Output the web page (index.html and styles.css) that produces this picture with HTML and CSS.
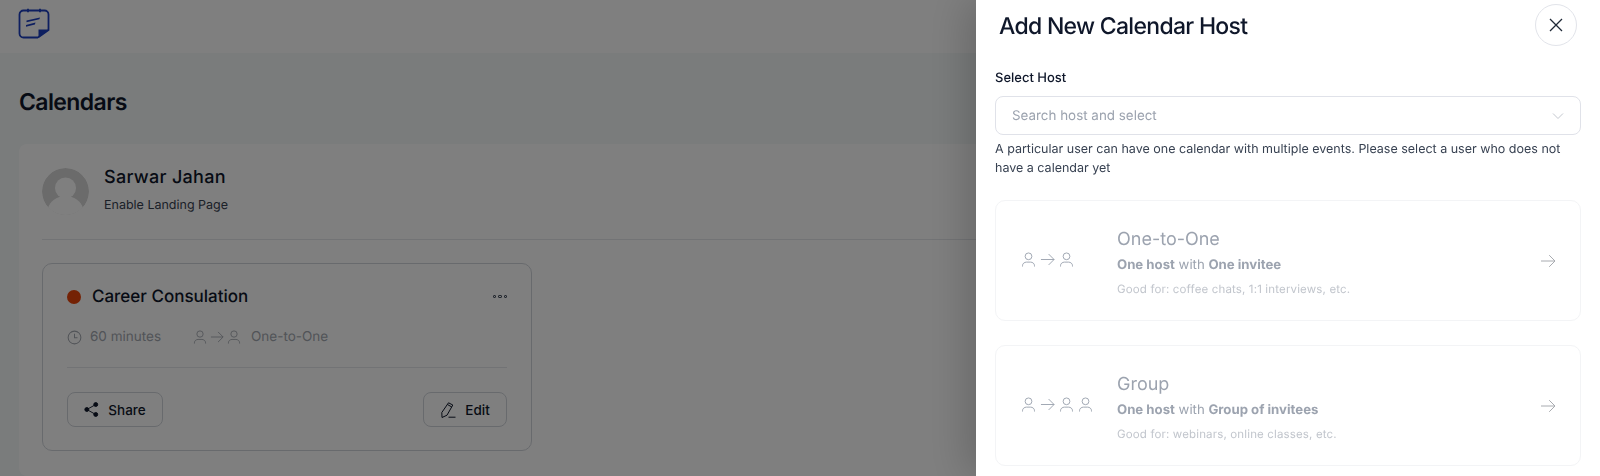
FILE: index.html
```html
<!DOCTYPE html>
<html lang="en">
<head>
    <meta charset="UTF-8">
    <meta name="viewport" content="width=device-width, initial-scale=1.0">
    <title>Calendars</title>
    <link rel="stylesheet" href="styles.css">
</head>
<body>
    <svg class="icon-defs" width="0" height="0">
        <defs>
            <symbol id="person" viewBox="0 0 16 16">
                <circle cx="8" cy="4.600" r="3.600"/>
                <path d="M1.600 15.500v-.8c0-2.400 2-3.900 4.200-3.900h4.400c2.200 0 4.200 1.500 4.200 3.900v.8"/>
            </symbol>
            <symbol id="arrow" viewBox="0 0 16 16">
                <path d="M1 8h14M9.200 2.200 15 8l-5.800 5.800"/>
            </symbol>
        </defs>
    </svg>

    <header class="topbar">
        <svg class="logo" viewBox="0 0 32 32" width="32" height="32">
            <path d="M20 29.500H5.500a4 4 0 0 1-4-4V6.500a4 4 0 0 1 4-4h21a4 4 0 0 1 4 4V22l-10.500 7.500"/>
            <path d="M10 .8v3.500M22 .8v3.500"/>
            <path class="logo-fill" d="M20.500 29.500V21.500h10z"/>
            <path class="logo-fill" d="M8.500 12.500 22 9.500l-.6 1.800-12.900 2.900zM8 17l9.500-2.400-.6 1.800-8.900 2.300z"/>
        </svg>
    </header>

    <main class="content">
        <h1 class="page-title">Calendars</h1>
        <section class="panel">
            <div class="host-row">
                <svg class="avatar" viewBox="0 0 47 47" width="47" height="47">
                    <circle class="avatar-bg" cx="23.500" cy="23.500" r="23.500"/>
                    <circle class="avatar-fg" cx="23.500" cy="20" r="10.500"/>
                    <path class="avatar-fg" d="M6 40c2-7 9-12 17.500-12S39 33 41 40c-4 4.500-10.500 7-17.500 7S10 44.500 6 40z"/>
                </svg>
                <div>
                    <div class="host-name">Sarwar Jahan</div>
                    <div class="host-sub">Enable Landing Page</div>
                </div>
            </div>

            <article class="event-card">
                <div class="event-head">
                    <span class="event-dot"></span>
                    <span class="event-title">Career Consulation</span>
                    <span class="event-more"><i></i><i></i><i></i></span>
                </div>
                <div class="event-meta">
                    <span class="meta-item">
                        <svg class="clock" viewBox="0 0 16 16" width="15" height="15"><circle cx="8" cy="8" r="6.800"/><path d="M8 4v4.300h3.200"/></svg>
                        60 minutes
                    </span>
                    <span class="meta-item meta-type">
                        <span class="flow flow-small">
                            <svg><use href="#person"/></svg><svg><use href="#arrow"/></svg><svg><use href="#person"/></svg>
                        </span>
                        One-to-One
                    </span>
                </div>
                <div class="event-actions">
                    <button class="btn btn-share" type="button">
                        <svg viewBox="0 0 16 16" width="15" height="15"><circle cx="3" cy="8" r="2.100"/><circle cx="12.500" cy="2.700" r="2.100"/><circle cx="12.500" cy="13.300" r="2.100"/><path d="M3 8l9.500-5.300M3 8l9.500 5.300"/></svg>
                        Share
                    </button>
                    <button class="btn btn-edit" type="button">
                        <svg viewBox="0 0 16 16" width="16" height="16"><path d="M8.500.8 12.800 3 7 13.200 2 15.500l-.2-5zM7.600 2.600 11.800 5"/><path d="M8.500 15.200h7"/></svg>
                        Edit
                    </button>
                </div>
            </article>
        </section>
    </main>

    <div class="overlay"></div>

    <aside class="drawer">
        <div class="drawer-head">
            <h2 class="drawer-title">Add New Calendar Host</h2>
            <button class="close-btn" type="button">
                <svg viewBox="0 0 14 14" width="14" height="14"><path d="M1 1l12 12M13 1 1 13"/></svg>
            </button>
        </div>

        <label class="field-label">Select Host</label>
        <div class="select-box">
            <span>Search host and select</span>
            <svg viewBox="0 0 12 8" width="12" height="8"><path d="M1 1.500 6 6.500l5-5"/></svg>
        </div>
        <p class="field-help">A particular user can have one calendar with multiple events. Please select a user who does not have a calendar yet</p>

        <div class="type-card">
            <span class="flow">
                <svg><use href="#person"/></svg><svg><use href="#arrow"/></svg><svg><use href="#person"/></svg>
            </span>
            <div class="type-text">
                <div class="type-name">One-to-One</div>
                <div class="type-desc"><b>One host</b> with <b>One invitee</b></div>
                <div class="type-good">Good for: coffee chats, 1:1 interviews, etc.</div>
            </div>
            <svg class="type-arrow"><use href="#arrow"/></svg>
        </div>

        <div class="type-card">
            <span class="flow">
                <svg><use href="#person"/></svg><svg><use href="#arrow"/></svg><svg><use href="#person"/></svg><svg><use href="#person"/></svg>
            </span>
            <div class="type-text">
                <div class="type-name">Group</div>
                <div class="type-desc"><b>One host</b> with <b>Group of invitees</b></div>
                <div class="type-good">Good for: webinars, online classes, etc.</div>
            </div>
            <svg class="type-arrow"><use href="#arrow"/></svg>
        </div>
    </aside>
</body>
</html>
```

FILE: styles.css
```css
* {
    box-sizing: border-box;
}

html, body {
    height: 100%;
}

body {
    margin: 0;
    overflow: hidden;
    background: #f4f8f8;
    color: #0f172a;
    font-family: Inter, "Liberation Sans", sans-serif;
    text-rendering: geometricPrecision;
}

.icon-defs {
    position: absolute;
}

.topbar {
    height: 53px;
    background: #fff;
    padding: 8px 0 0 18px;
}

.logo {
    display: block;
    fill: none;
    stroke: #1c3fc0;
    stroke-width: 1.800;
}

.logo-fill {
    fill: #1c3fc0;
    stroke: none;
}

.content {
    padding: 0 0 0 19px;
}

.page-title {
    margin: 0;
    padding-top: 34px;
    height: 91px;
    font-size: 23px;
    line-height: 30px;
    font-weight: 600;
    letter-spacing: -0.6px;
}

.panel {
    background: #fff;
    border-radius: 8px;
    padding: 24px 23px;
    height: 332px;
}

.host-row {
    display: flex;
    gap: 15px;
    height: 72px;
    border-bottom: 1px solid #e5e7eb;
}

.avatar-bg {
    fill: #d6d6d6;
}

.avatar-fg {
    fill: #fff;
}

.avatar {
    clip-path: circle(50%);
}

.host-name {
    font-size: 18px;
    line-height: 22px;
    font-weight: 500;
    letter-spacing: 0.3px;
    margin-top: -1px;
}

.host-sub {
    font-size: 12.500px;
    line-height: 16px;
    margin-top: 9px;
    color: #374151;
}

.event-card {
    width: 490px;
    height: 188px;
    margin-top: 23px;
    padding: 0 24px;
    border: 1px solid #d1d5db;
    border-radius: 10px;
}

.event-head {
    display: flex;
    align-items: center;
    height: 65px;
}

.event-dot {
    width: 14px;
    height: 14px;
    border-radius: 50%;
    background: #e8440a;
    margin-right: 11px;
}

.event-title {
    flex: 1;
    font-size: 17px;
    font-weight: 500;
}

.event-more {
    display: flex;
    gap: 2px;
}

.event-more i {
    width: 3.500px;
    height: 3.500px;
    border-radius: 1px;
    border: 1px solid #4b5563;
}

.event-meta {
    display: flex;
    align-items: center;
    gap: 32px;
    height: 38px;
    padding-bottom: 22px;
    font-size: 13.500px;
    color: #a3a8b0;
}

.meta-item {
    display: flex;
    align-items: center;
    gap: 8px;
    height: 20px;
    flex: none;
}

.meta-type {
    gap: 10px;
}

.clock {
    fill: none;
    stroke: #a3a8b0;
    stroke-width: 1.100;
}

.event-actions {
    display: flex;
    justify-content: space-between;
    padding-top: 24px;
    border-top: 1px solid #e5e7eb;
}

.btn {
    display: flex;
    align-items: center;
    justify-content: center;
    gap: 9px;
    height: 35px;
    padding: 0;
    background: none;
    border: 1px solid #d1d5db;
    border-radius: 8px;
    font-family: inherit;
    font-size: 13.500px;
    font-weight: 500;
    color: #0f172a;
}

.btn-share {
    width: 96px;
}

.btn-edit {
    width: 84px;
}

.btn svg {
    fill: none;
    stroke: #0f172a;
    stroke-width: 1;
}

.btn-share svg {
    fill: #0f172a;
}

.flow {
    display: flex;
    align-items: center;
    gap: 4px;
}

.flow svg {
    width: 15px;
    height: 15px;
    fill: none;
    stroke: #9ca3af;
    stroke-width: 1;
}

.flow-small {
    gap: 3px;
}

.flow-small svg {
    width: 14px;
    height: 14px;
    stroke: #a3a8b0;
}

.overlay {
    position: fixed;
    inset: 0;
    background: rgba(0, 0, 0, 0.5);
}

.drawer {
    position: fixed;
    top: 0;
    right: 0;
    bottom: 0;
    width: 624px;
    padding: 0 19px;
    background: #fff;
    box-shadow: -8px 0 40px rgba(0, 0, 0, 0.2);
    overflow: hidden;
}

.drawer-head {
    display: flex;
    justify-content: space-between;
    align-items: center;
    height: 51px;
    padding: 1px 4px 0;
}

.drawer-title {
    margin: 0;
    font-size: 23px;
    font-weight: 500;
    letter-spacing: -0.7px;
}

.close-btn {
    display: flex;
    align-items: center;
    justify-content: center;
    width: 42px;
    height: 42px;
    margin-top: -2px;
    padding: 0;
    background: #fff;
    border: 1px solid #e2e4ea;
    border-radius: 50%;
}

.close-btn svg {
    fill: none;
    stroke: #1f2937;
    stroke-width: 1.300;
}

.field-label {
    display: block;
    margin-top: 18px;
    font-size: 13px;
    line-height: 18px;
    font-weight: 500;
}

.select-box {
    display: flex;
    justify-content: space-between;
    align-items: center;
    height: 39px;
    margin-top: 9px;
    padding: 1px 16px 0;
    border: 1px solid #e0e2e9;
    border-radius: 8px;
    font-size: 13.400px;
    color: #9ca3af;
}

.select-box svg {
    fill: none;
    stroke: #c4c8cf;
    stroke-width: 1;
}

.field-help {
    margin: 5px 0 0;
    font-size: 12.500px;
    line-height: 19px;
    color: #374151;
}

.type-card {
    display: flex;
    align-items: center;
    height: 121px;
    margin-top: 22px;
    margin-bottom: 24px;
    padding: 0 25px;
    border: 1px solid #f3f4f6;
    border-radius: 10px;
}

.type-card + .type-card {
    margin-top: 0;
}

.type-card .flow {
    width: 96px;
    margin-top: -2px;
}

.type-text {
    flex: 1;
    padding-top: 3px;
}

.type-name {
    font-size: 18px;
    line-height: 24px;
    color: #9ca3af;
}

.type-desc {
    margin-top: 4px;
    font-size: 13.200px;
    line-height: 18px;
    color: #9ca3af;
}

.type-desc b {
    font-weight: 700;
}

.type-good {
    margin-top: 7px;
    font-size: 11.500px;
    line-height: 16px;
    letter-spacing: 0.15px;
    color: #c1c5cc;
}

.type-arrow {
    width: 16px;
    height: 16px;
    margin-right: -1px;
    fill: none;
    stroke: #a8abb0;
    stroke-width: 1;
}
```
